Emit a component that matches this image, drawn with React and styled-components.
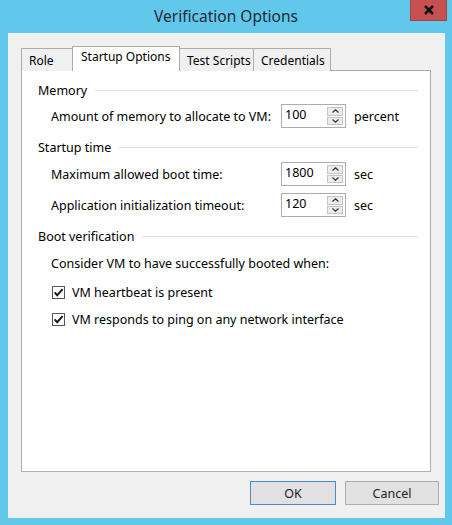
import React from 'react';
import styled, { createGlobalStyle } from 'styled-components';

const GlobalStyle = createGlobalStyle`
  html, body {
    margin: 0;
    padding: 0;
    background: #60c7ea;
  }
  body {
    font-family: 'Noto Sans', 'Open Sans', sans-serif;
    font-size: 12.5px;
    color: #000;
  }
`;

const Window = styled.div`
  width: 452px;
  height: 525px;
  background: #62c8eb;
  display: flex;
  flex-direction: column;
  box-sizing: border-box;
  padding: 0 7px 7px 8px;
`;

const TitleBar = styled.div`
  height: 33px;
  display: flex;
  align-items: center;
  justify-content: center;
  position: relative;
  margin: 0 -7px 0 -8px;
`;

const Title = styled.div`
  font-size: 15.5px;
  color: #1c2a36;
  padding-bottom: 2px;
`;

const CloseButton = styled.div`
  position: absolute;
  top: 0;
  right: 5px;
  width: 37px;
  height: 21px;
  background: #c75050;
  border: 1px solid #a04545;
  border-top: none;
  box-sizing: border-box;
  display: flex;
  align-items: center;
  justify-content: center;
`;

const Client = styled.div`
  flex: 1;
  background: #f0f0f0;
  display: flex;
  flex-direction: column;
  padding: 13px 6px 13px 13px;
  box-sizing: border-box;
`;

const TabStrip = styled.div`
  display: flex;
  align-items: flex-end;
  height: 25px;
  margin-right: 8px;
`;

const Tab = styled.div`
  width: ${(p) => p.$w}px;
  height: ${(p) => (p.$active ? 25 : 23)}px;
  box-sizing: border-box;
  border: 1px solid #acacac;
  border-bottom: none;
  border-left-width: ${(p) => (p.$first || p.$active ? 1 : 0)}px;
  border-right-width: ${(p) => (p.$beforeActive ? 0 : 1)}px;
  background: ${(p) => (p.$active ? '#fff' : '#f0f0f0')};
  position: relative;
  z-index: ${(p) => (p.$active ? 2 : 0)};
  padding: ${(p) => (p.$active ? '1px 0 0 8px' : '3px 0 0 7px')};
  font-size: 12px;
  line-height: 17px;
  white-space: nowrap;
`;

const Pane = styled.div`
  flex: 1;
  margin-top: -1px;
  margin-right: 8px;
  background: #fff;
  border: 1px solid #acacac;
  border-bottom-color: #b0b0b0;
  padding: 9px 12px 0 16px;
  display: flex;
  flex-direction: column;
`;

const GroupHeader = styled.div`
  display: flex;
  align-items: center;
  height: 20px;
  margin-top: ${(p) => p.$mt || 0}px;
  &::after {
    content: '';
    flex: 1;
    height: 1px;
    background: #dcdcdc;
    margin-left: 8px;
    margin-top: 1px;
  }
`;

const Row = styled.div`
  display: flex;
  align-items: center;
  height: ${(p) => p.$h || 24}px;
  margin-top: ${(p) => p.$mt || 0}px;
  padding-left: ${(p) => p.$indent ?? 13}px;
`;

const FieldLabel = styled.div`
  width: 230px;
  white-space: nowrap;
`;

const SpinBox = styled.div`
  width: 65px;
  height: 24px;
  box-sizing: border-box;
  border: 1px solid #abadb3;
  display: flex;
  align-items: stretch;
  background: #fff;
`;

const SpinValue = styled.div`
  flex: 1;
  padding: 2px 0 0 3px;
  line-height: 16px;
`;

const SpinButtons = styled.div`
  width: 16px;
  display: flex;
  flex-direction: column;
  gap: 1px;
  padding: 2px 2px 2px 0;
`;

const SpinButton = styled.div`
  flex: 1;
  background: #ececec;
  border: 1px solid #c4c4c4;
  display: flex;
  align-items: center;
  justify-content: center;
`;

const Unit = styled.div`
  margin-left: 8px;
`;

const CheckBox = styled.div`
  width: 13px;
  height: 13px;
  box-sizing: border-box;
  border: 1px solid #555;
  background: #fff;
  display: flex;
  align-items: center;
  justify-content: center;
  margin-right: 7px;
`;

const ButtonRow = styled.div`
  display: flex;
  justify-content: flex-end;
  gap: 9px;
  margin-top: 9px;
`;

const Button = styled.div`
  height: 24px;
  width: ${(p) => p.$w}px;
  box-sizing: border-box;
  background: #e1e1e1;
  border: 1px solid ${(p) => (p.$default ? '#4d8ac6' : '#adadad')};
  display: flex;
  align-items: center;
  justify-content: center;
  color: #222;
`;

const Arrow = ({ up }) => (
  <svg width="7" height="4" viewBox="0 0 7 4">
    <path
      d={up ? 'M0.5 3.5 L3.5 0.8 L6.5 3.5' : 'M0.5 0.5 L3.5 3.2 L6.5 0.5'}
      fill="none"
      stroke="#333"
      strokeWidth="1.2"
    />
  </svg>
);

const Spin = ({ value }) => (
  <SpinBox>
    <SpinValue>{value}</SpinValue>
    <SpinButtons>
      <SpinButton>
        <Arrow up />
      </SpinButton>
      <SpinButton>
        <Arrow />
      </SpinButton>
    </SpinButtons>
  </SpinBox>
);

const Check = () => (
  <CheckBox>
    <svg width="11" height="11" viewBox="0 0 11 11">
      <path d="M1.6 5.4 L4.2 8.2 L9.6 2.2" fill="none" stroke="#1a1a1a" strokeWidth="2" />
    </svg>
  </CheckBox>
);

const tabs = [
  { label: 'Role', w: 51 },
  { label: 'Startup Options', w: 108, active: true },
  { label: 'Test Scripts', w: 74 },
  { label: 'Credentials', w: 77 },
];

const App = () => {
  return (
    <>
      <GlobalStyle />
      <Window>
        <TitleBar>
          <Title>Verification Options</Title>
          <CloseButton>
            <svg width="12" height="10" viewBox="0 0 12 10">
              <path d="M2 1 L10 9 M10 1 L2 9" stroke="#111" strokeWidth="2.6" />
            </svg>
          </CloseButton>
        </TitleBar>
        <Client>
          <TabStrip>
            {tabs.map((t, i) => (
              <Tab
                key={t.label}
                $w={t.w}
                $active={t.active}
                $first={i === 0}
                $beforeActive={tabs[i + 1] && tabs[i + 1].active}
              >
                {t.label}
              </Tab>
            ))}
          </TabStrip>
          <Pane>
            <GroupHeader>Memory</GroupHeader>
            <Row $mt={4}>
              <FieldLabel>Amount of memory to allocate to VM:</FieldLabel>
              <Spin value="100" />
              <Unit>percent</Unit>
            </Row>
            <GroupHeader $mt={9}>Startup time</GroupHeader>
            <Row $mt={5}>
              <FieldLabel>Maximum allowed boot time:</FieldLabel>
              <Spin value="1800" />
              <Unit>sec</Unit>
            </Row>
            <Row $mt={7}>
              <FieldLabel>Application initialization timeout:</FieldLabel>
              <Spin value="120" />
              <Unit>sec</Unit>
            </Row>
            <GroupHeader $mt={9}>Boot verification</GroupHeader>
            <Row $mt={7} $h={20}>
              Consider VM to have successfully booted when:
            </Row>
            <Row $mt={9} $h={20} $indent={14}>
              <Check />
              VM heartbeat is present
            </Row>
            <Row $mt={7} $h={20} $indent={14}>
              <Check />
              VM responds to ping on any network interface
            </Row>
          </Pane>
          <ButtonRow>
            <Button $w={86} $default>
              OK
            </Button>
            <Button $w={94}>Cancel</Button>
          </ButtonRow>
        </Client>
      </Window>
    </>
  );
};

export default App;
